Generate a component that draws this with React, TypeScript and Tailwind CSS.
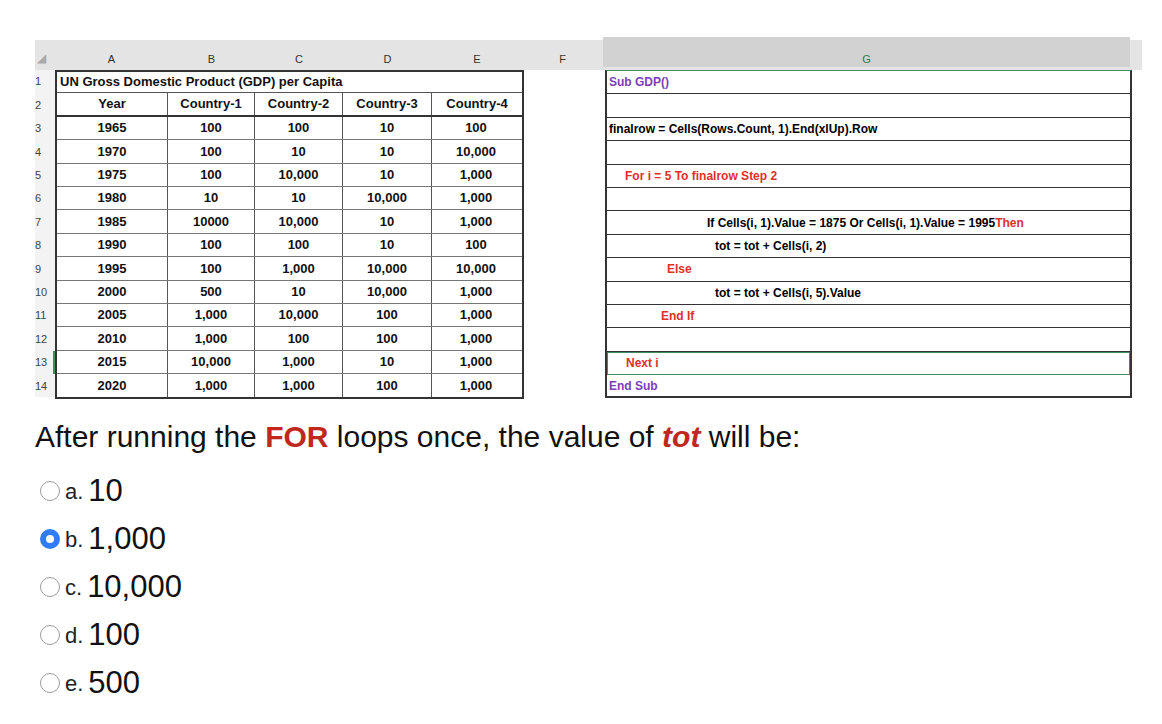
const rows: (string | number)[][] = [
  ["1965", "100", "100", "10", "100"],
  ["1970", "100", "10", "10", "10,000"],
  ["1975", "100", "10,000", "10", "1,000"],
  ["1980", "10", "10", "10,000", "1,000"],
  ["1985", "10000", "10,000", "10", "1,000"],
  ["1990", "100", "100", "10", "100"],
  ["1995", "100", "1,000", "10,000", "10,000"],
  ["2000", "500", "10", "10,000", "1,000"],
  ["2005", "1,000", "10,000", "100", "1,000"],
  ["2010", "1,000", "100", "100", "1,000"],
  ["2015", "10,000", "1,000", "10", "1,000"],
  ["2020", "1,000", "1,000", "100", "1,000"],
];

const code: { text: React.ReactNode; cls: string }[] = [
  { text: "Sub GDP()", cls: "text-[#7b3fb5]" },
  { text: "", cls: "" },
  { text: "finalrow = Cells(Rows.Count, 1).End(xlUp).Row", cls: "text-black" },
  { text: "", cls: "" },
  { text: "For i = 5 To finalrow Step 2", cls: "text-[#e0302a] pl-[18px]" },
  { text: "", cls: "" },
  {
    text: (
      <>
        If Cells(i, 1).Value = 1875 Or Cells(i, 1).Value = 1995{" "}
        <span className="text-[#e0302a]">Then</span>
      </>
    ),
    cls: "text-black pl-[100px]",
  },
  { text: "tot = tot + Cells(i, 2)", cls: "text-black pl-[108px]" },
  { text: "Else", cls: "text-[#e0302a] pl-[60px]" },
  { text: "tot = tot + Cells(i, 5).Value", cls: "text-black pl-[108px]" },
  { text: "End If", cls: "text-[#e0302a] pl-[54px]" },
  { text: "", cls: "" },
  { text: "Next i", cls: "text-[#e0302a] pl-[18px]" },
  { text: "End Sub", cls: "text-[#7b3fb5]" },
];

const cols = ["A", "B", "C", "D", "E"];
const widths = ["w-[113px]", "w-[87px]", "w-[88px]", "w-[89px]", "w-[90px]"];

function Radio({ checked }: { checked?: boolean }) {
  return checked ? (
    <span className="w-[20px] h-[20px] rounded-full bg-[#2f7cf6] flex items-center justify-center">
      <span className="w-[8px] h-[8px] rounded-full bg-white" />
    </span>
  ) : (
    <span className="w-[20px] h-[20px] rounded-full border border-[#9a9a9a] bg-white" />
  );
}

export default function App() {
  const options = [
    ["a.", "10"],
    ["b.", "1,000"],
    ["c.", "10,000"],
    ["d.", "100"],
    ["e.", "500"],
  ];
  return (
    <div className="w-[1162px] h-[724px] bg-white font-[Arial,Liberation_Sans,sans-serif] pt-[40px] overflow-hidden">
      {/* sheet */}
      <div className="ml-[35px] w-[1107px] text-[13px] font-bold text-[#111]">
        <div className="flex h-[30px] bg-[#e4e4e4] text-[11px] font-normal text-[#333] items-end pb-[3px]">
          <div className="w-[20px] text-[#aaa] text-[12px] pl-[2px]">◢</div>
          {cols.map((c, i) => (
            <div key={c} className={`${widths[i]} text-center`}>{c}</div>
          ))}
          <div className="w-[81px] text-center">F</div>
          <div className="w-[527px] text-center text-[#2f7a4a] bg-[#d2d2d2] h-[30px] flex items-end justify-center">G</div>
        </div>
        <div className="flex">
          <div className="flex flex-col">
            {Array.from({ length: 14 }).map((_, i) => (
              <div key={i} className={`h-[23.4px] w-[20px] flex items-center text-[11px] font-normal text-[#444] bg-[#f3f3f3] ${i === 12 ? "border-r-2 border-[#3f8f5c] text-[#3f8f5c]" : ""}`}>
                {i + 1}
              </div>
            ))}
          </div>
          <div className="flex flex-col border-2 border-[#333] h-fit">
            <div className="h-[21.4px] flex items-center pl-[3px] border-b border-[#555]">UN Gross Domestic Product (GDP) per Capita</div>
            <div className="flex h-[23.4px] border-b-2 border-[#333]">
              {["Year", "Country-1", "Country-2", "Country-3", "Country-4"].map((h, i) => (
                <div key={h} className={`${i === 0 ? "w-[111px]" : widths[i]} flex items-center justify-center ${i < 4 ? "border-r border-[#555]" : ""}`}>{h}</div>
              ))}
            </div>
            {rows.map((r, ri) => (
              <div key={ri} className={`flex h-[23.4px] ${ri < rows.length - 1 ? "border-b border-[#777]" : "h-[21.4px]"}`}>
                {r.map((v, i) => (
                  <div key={i} className={`${i === 0 ? "w-[111px]" : i === 4 ? "w-[88px]" : widths[i]} flex items-center justify-center ${i < 4 ? "border-r border-[#555]" : ""}`}>{v}</div>
                ))}
              </div>
            ))}
          </div>
          <div className="w-[81px]" />
          <div className="flex flex-col w-[527px] border-x-2 border-[#333] border-t border-t-[#3f8f5c] h-fit text-[12px]">
            {code.map((c, i) => (
              <div key={i} className={`h-[23.4px] flex items-center pl-[2px] whitespace-nowrap ${c.cls} ${i === 12 ? "border border-[#3f8f5c]" : "border-b border-[#333]"} ${i === 13 ? "border-b-2" : ""}`}>
                {c.text}
              </div>
            ))}
          </div>
        </div>
      </div>
      {/* question */}
      <div className="pl-[35px] mt-[20px] text-[30px] text-[#111] leading-[36px]">
        After running the <span className="text-[#c0281e] font-bold">FOR</span> loops once, the value of{" "}
        <span className="text-[#c0281e] font-bold italic">tot</span> will be:
      </div>
      <div className="pl-[40px] mt-[18px] flex flex-col gap-[12px]">
        {options.map(([l, v], i) => (
          <div key={l} className="flex items-center gap-[5px] h-[36px]">
            <Radio checked={i === 1} />
            <span className="text-[22px] text-[#222]">{l}</span>
            <span className="text-[31px] text-[#111]">{v}</span>
          </div>
        ))}
      </div>
    </div>
  );
}
